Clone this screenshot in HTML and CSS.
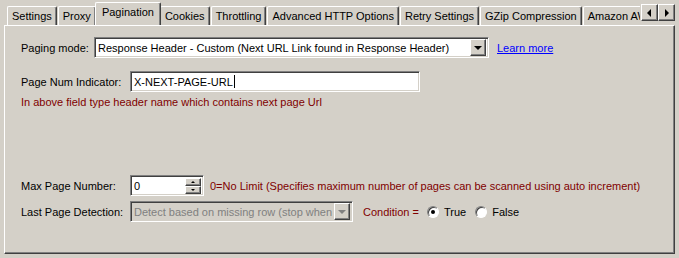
FILE: index.html
```html
<!DOCTYPE html>
<html>
<head>
  <title>Pagination</title>
  <link rel="stylesheet" href="styles.css">
</head>
<body>

<div class="window">
  <div class="tabbar">
    <div class="tabs">
      <div class="tab first">Settings</div>
      <div class="tab">Proxy</div>
      <div class="tab active">Pagination</div>
      <div class="tab">Cookies</div>
      <div class="tab">Throttling</div>
      <div class="tab">Advanced HTTP Options</div>
      <div class="tab">Retry Settings</div>
      <div class="tab">GZip Compression</div>
      <div class="tab">Amazon AWS</div>
    </div>
    <div class="scroller">
      <div class="btn arrow"><span class="tri-left"></span></div>
      <div class="btn arrow"><span class="tri-right"></span></div>
    </div>
  </div>

  <div class="panel">
    <!-- paging mode -->
    <div class="row row-mode">
      <span class="label lbl-mode">Paging mode:</span>
      <div class="combo combo-mode">
        <span class="combo-text">Response Header - Custom (Next URL Link found in Response Header)</span>
        <div class="btn drop"><span class="tri-down"></span></div>
      </div>
      <a class="link" href="#">Learn more</a>
    </div>

    <div class="row row-ind">
      <span class="label lbl-wide">Page Num Indicator:</span>
      <div class="field field-ind">X-NEXT-PAGE-URL<span class="caret"></span></div>
    </div>
    <div class="note note-ind">In above field type header name which contains next page Url</div>

    <div class="row row-max">
      <span class="label lbl-wide">Max Page Number:</span>
      <div class="field spin">
        <span class="spin-text">0</span>
        <div class="spin-btns">
          <div class="btn spin-btn"><span class="tri-up small"></span></div>
          <div class="btn spin-btn"><span class="tri-down small"></span></div>
        </div>
      </div>
      <span class="note note-max">0=No Limit (Specifies maximum number of pages can be scanned using auto increment)</span>
    </div>

    <div class="row row-last">
      <span class="label lbl-wide">Last Page Detection:</span>
      <div class="combo combo-last disabled">
        <span class="combo-text">Detect based on missing row (stop when</span>
        <div class="btn drop"><span class="tri-down grey"></span></div>
      </div>
      <span class="note cond">Condition =</span>
      <label class="radio"><span class="dot checked"></span>True</label>
      <label class="radio"><span class="dot"></span>False</label>
    </div>
  </div>
</div>

</body>
</html>
```

FILE: styles.css
```css
* {
  box-sizing: border-box;
}

body {
  margin: 0;
  background: #d4d0c8;
  font-family: "Liberation Sans", Arial, sans-serif;
  font-size: 11px;
  color: #000;
}

.window {
  width: 679px;
  height: 258px;
  padding: 1px 4px 0 4px;
}

/* Tab strip */
.tabbar {
  position: relative;
  height: 24px;
}

.tabs {
  display: flex;
  align-items: flex-end;
  height: 24px;
  width: 636px;
  padding-left: 3px;
  overflow: hidden;
}

.tab {
  flex: none;
  height: 19px;
  line-height: 18px;
  padding: 0 4px 0 4px;
  margin-right: 1px;
  border-top: 1px solid #fff;
  border-left: 1px solid #fff;
  border-right: 1px solid #404040;
  box-shadow: inset -1px 0 #808080;
  border-radius: 2px 2px 0 0;
  white-space: nowrap;
  position: relative;
  z-index: 1;
}

.tab.active {
  height: 24px;
  line-height: 19px;
  margin: 0 0 -1px -2px;
  padding: 0 6px 0 6px;
  background: #d4d0c8;
  z-index: 3;
}

.tab.active + .tab {
  margin-left: -1px;
}

.scroller {
  position: absolute;
  right: 0;
  top: 3px;
  display: flex;
  z-index: 4;
}

.btn {
  background: #d4d0c8;
  border-top: 1px solid #fff;
  border-left: 1px solid #fff;
  border-right: 1px solid #404040;
  border-bottom: 1px solid #404040;
  box-shadow: inset -1px -1px #808080;
  display: flex;
  align-items: center;
  justify-content: center;
}

.arrow {
  width: 17px;
  height: 17px;
}

.tri-left, .tri-right, .tri-down, .tri-up {
  width: 0;
  height: 0;
  border: 4px solid transparent;
}

.tri-left {
  border-right-color: #000;
  border-left-width: 0;
  margin-left: -1px;
}

.tri-right {
  border-left-color: #000;
  border-right-width: 0;
}

.tri-down {
  border-top-color: #000;
  border-bottom-width: 0;
  border-left-width: 4px;
  border-right-width: 4px;
  margin-top: 1px;
}

.tri-up {
  border-bottom-color: #000;
  border-top-width: 0;
}

.tri-down.small, .tri-up.small {
  border-width: 2px;
}

.tri-down.small {
  border-bottom-width: 0;
  margin-top: 0;
}

.tri-up.small {
  border-top-width: 0;
}

.tri-down.grey {
  border-top-color: #808080;
}

/* Panel */
.panel {
  position: relative;
  z-index: 2;
  height: 229px;
  border-top: 1px solid #fff;
  border-left: 1px solid #fff;
  border-right: 1px solid #404040;
  border-bottom: 1px solid #404040;
  box-shadow: inset -1px -1px #808080;
  padding: 11px 0 0 15px;
}

.row {
  display: flex;
  align-items: center;
  height: 21px;
}

.label {
  flex: none;
  white-space: nowrap;
}

.lbl-mode {
  width: 74px;
  padding-left: 1px;
}

.lbl-wide {
  width: 110px;
  padding-left: 1px;
}

.field, .combo {
  background: #fff;
  height: 21px;
  border-top: 1px solid #808080;
  border-left: 1px solid #808080;
  border-right: 1px solid #fff;
  border-bottom: 1px solid #fff;
  box-shadow: inset 1px 1px #404040, inset -1px -1px #d4d0c8;
  display: flex;
  align-items: center;
  overflow: hidden;
  white-space: nowrap;
}

.combo {
  padding: 2px 2px 2px 3px;
}

.combo-text {
  flex: 1;
  min-width: 0;
  overflow: hidden;
  padding-top: 1px;
}

.combo .drop {
  flex: none;
  width: 16px;
  height: 17px;
}

.combo-mode {
  width: 395px;
}

.link {
  margin-left: 8px;
  color: #0000ff;
  text-decoration: underline;
}

.row-ind {
  margin-top: 13px;
}

.field-ind {
  width: 290px;
  padding-left: 3px;
}

.caret {
  display: inline-block;
  width: 1px;
  height: 13px;
  background: #000;
  margin-left: 1px;
}

.note {
  color: #800000;
  white-space: nowrap;
}

.note-ind {
  margin-top: 3px;
  padding-left: 1px;
  line-height: 14px;
}

.row-max {
  margin-top: 66px;
}

.spin {
  width: 74px;
  padding: 2px 2px 2px 3px;
}

.spin-text {
  flex: 1;
}

.spin-btns {
  display: flex;
  flex-direction: column;
}

.spin-btn {
  width: 16px;
  height: 8px;
}

.note-max {
  margin-left: 6px;
}

.row-last {
  margin-top: 5px;
}

.combo-last {
  width: 223px;
  background: #d4d0c8;
  color: #808080;
}

.cond {
  margin-left: 10px;
}

.radio {
  display: flex;
  align-items: center;
  margin-left: 8px;
}

.radio + .radio {
  margin-left: 9px;
}

.dot {
  width: 12px;
  height: 12px;
  border-radius: 50%;
  background: #fff;
  border: 1px solid;
  border-color: #808080 #fff #fff #808080;
  box-shadow: inset 1px 1px #404040;
  margin-right: 5px;
  display: flex;
  align-items: center;
  justify-content: center;
}

.dot.checked::after {
  content: "";
  width: 4px;
  height: 4px;
  border-radius: 50%;
  background: #000;
}
```
